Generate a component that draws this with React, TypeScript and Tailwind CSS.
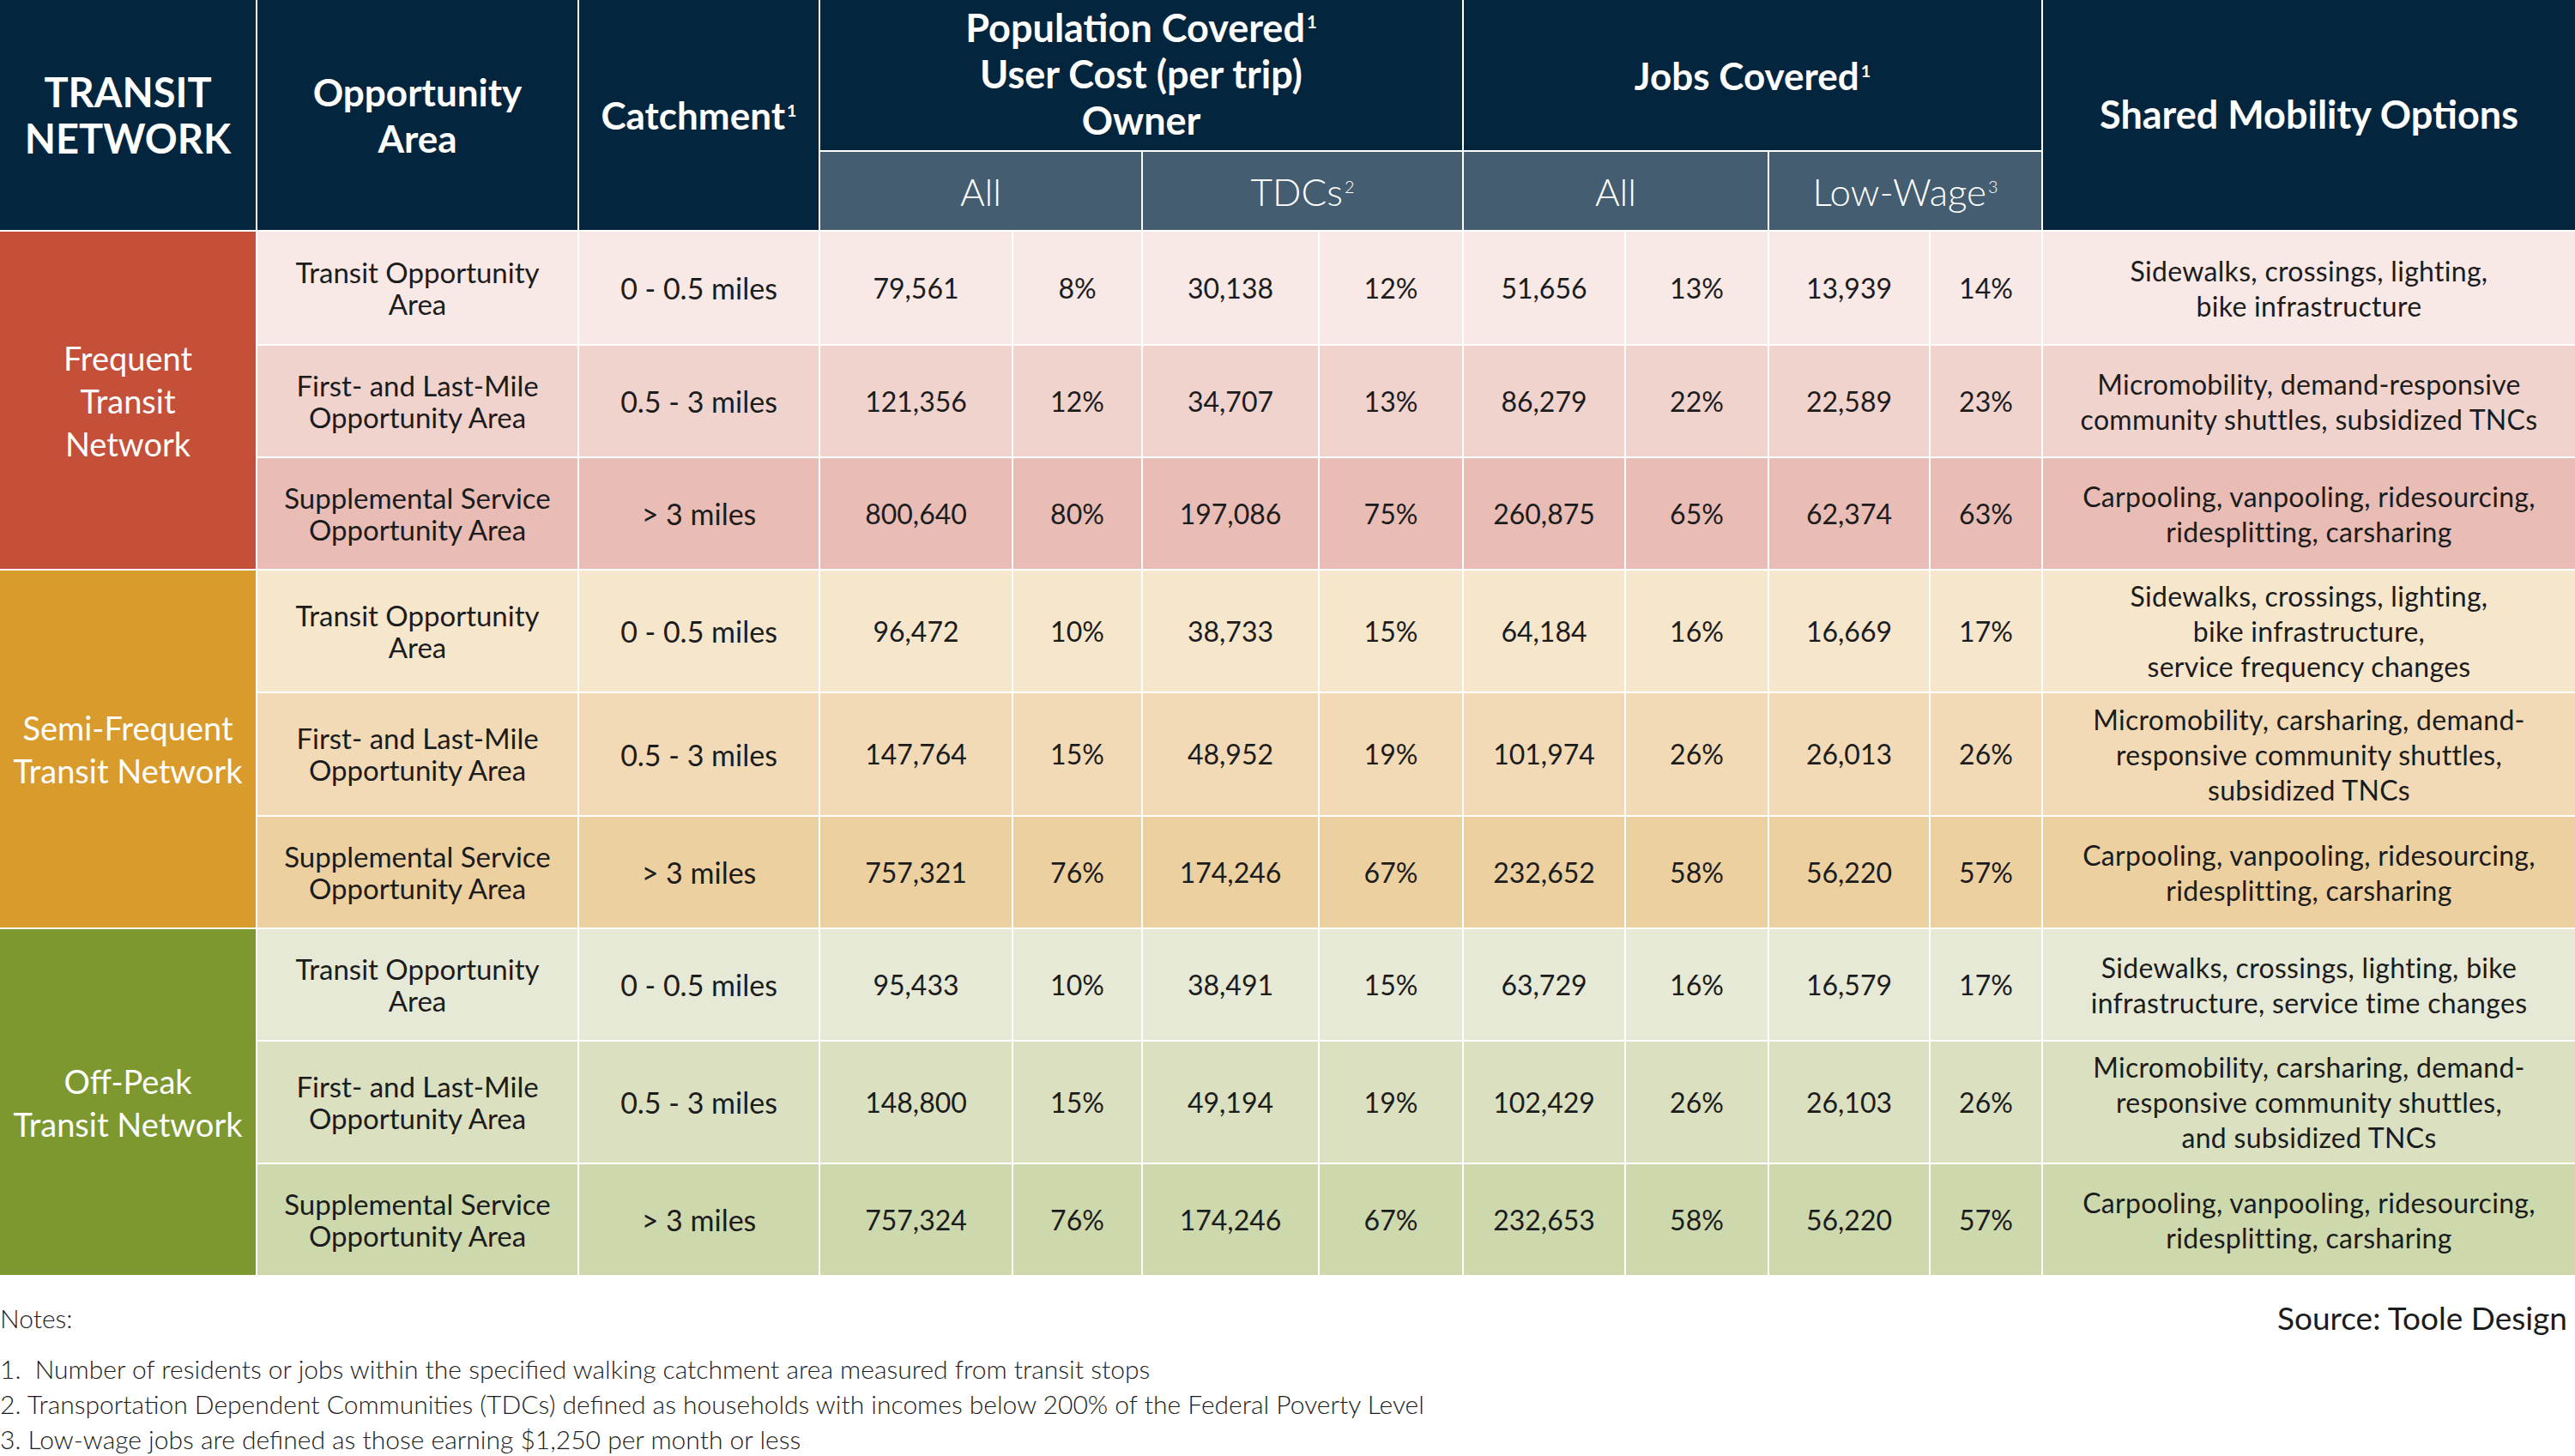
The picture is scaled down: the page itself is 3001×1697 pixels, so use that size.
import clsx from "clsx";

type Row = {
  area: string[];
  catchment: string;
  values: string[];
  options: string[];
  bg: string;
  h: string;
};

type Network = {
  label: string[];
  color: string;
  rows: Row[];
};

const areaTransit = ["Transit Opportunity", "Area"];
const areaFirstLast = ["First- and Last-Mile", "Opportunity Area"];
const areaSupp = ["Supplemental Service", "Opportunity Area"];
const carpool = ["Carpooling, vanpooling, ridesourcing,", "ridesplitting, carsharing"];

const networks: Network[] = [
  {
    label: ["Frequent", "Transit", "Network"],
    color: "bg-[#c5503a]",
    rows: [
      {
        area: areaTransit,
        catchment: "0 - 0.5 miles",
        values: ["79,561", "8%", "30,138", "12%", "51,656", "13%", "13,939", "14%"],
        options: ["Sidewalks, crossings, lighting,", "bike infrastructure"],
        bg: "bg-[#f8e8e6]",
        h: "h-[131px]",
      },
      {
        area: areaFirstLast,
        catchment: "0.5 - 3 miles",
        values: ["121,356", "12%", "34,707", "13%", "86,279", "22%", "22,589", "23%"],
        options: ["Micromobility, demand-responsive", "community shuttles, subsidized TNCs"],
        bg: "bg-[#f1d3ce]",
        h: "h-[129px]",
      },
      {
        area: areaSupp,
        catchment: "> 3 miles",
        values: ["800,640", "80%", "197,086", "75%", "260,875", "65%", "62,374", "63%"],
        options: carpool,
        bg: "bg-[#e9bcb5]",
        h: "h-[129px]",
      },
    ],
  },
  {
    label: ["Semi-Frequent", "Transit Network"],
    color: "bg-[#d99b2b]",
    rows: [
      {
        area: areaTransit,
        catchment: "0 - 0.5 miles",
        values: ["96,472", "10%", "38,733", "15%", "64,184", "16%", "16,669", "17%"],
        options: ["Sidewalks, crossings, lighting,", "bike infrastructure,", "service frequency changes"],
        bg: "bg-[#f6e6cc]",
        h: "h-[141px]",
      },
      {
        area: areaFirstLast,
        catchment: "0.5 - 3 miles",
        values: ["147,764", "15%", "48,952", "19%", "101,974", "26%", "26,013", "26%"],
        options: ["Micromobility, carsharing, demand-", "responsive community shuttles,", "subsidized TNCs"],
        bg: "bg-[#f3dab6]",
        h: "h-[142px]",
      },
      {
        area: areaSupp,
        catchment: "> 3 miles",
        values: ["757,321", "76%", "174,246", "67%", "232,652", "58%", "56,220", "57%"],
        options: carpool,
        bg: "bg-[#edd0a0]",
        h: "h-[129px]",
      },
    ],
  },
  {
    label: ["Off-Peak", "Transit Network"],
    color: "bg-[#7c982f]",
    rows: [
      {
        area: areaTransit,
        catchment: "0 - 0.5 miles",
        values: ["95,433", "10%", "38,491", "15%", "63,729", "16%", "16,579", "17%"],
        options: ["Sidewalks, crossings, lighting, bike", "infrastructure, service time changes"],
        bg: "bg-[#e6e9d5]",
        h: "h-[129px]",
      },
      {
        area: areaFirstLast,
        catchment: "0.5 - 3 miles",
        values: ["148,800", "15%", "49,194", "19%", "102,429", "26%", "26,103", "26%"],
        options: ["Micromobility, carsharing, demand-", "responsive community shuttles,", "and subsidized TNCs"],
        bg: "bg-[#dae0c0]",
        h: "h-[141px]",
      },
      {
        area: areaSupp,
        catchment: "> 3 miles",
        values: ["757,324", "76%", "174,246", "67%", "232,653", "58%", "56,220", "57%"],
        options: carpool,
        bg: "bg-[#cdd8ac]",
        h: "h-[129px]",
      },
    ],
  },
];

const notes = [
  "1.  Number of residents or jobs within the specified walking catchment area measured from transit stops",
  "2. Transportation Dependent Communities (TDCs) defined as households with incomes below 200% of the Federal Poverty Level",
  "3. Low-wage jobs are defined as those earning $1,250 per month or less",
];

function Sup({ n }: { n: string }) {
  return <span className="relative -top-[0.75em] ml-[2px] text-[0.45em] leading-[0]">{n}</span>;
}

const head = "flex items-center justify-center bg-[#03253d] text-center font-bold text-white";
const sub = "flex items-center justify-center bg-[#445d70] text-center text-[44px] font-light text-white";
const cell = "flex items-center justify-center text-center text-[#1c1c1c]";

export default function App() {
  return (
    <div className="w-[3001px] bg-white font-['Lato',sans-serif]">
      <div className="grid grid-cols-[298px_373px_279px_223px_149px_204px_166px_187px_165px_186px_129px_1fr] grid-rows-[175px_91px] gap-[2px] bg-white">
        {/* header */}
        <div className={clsx(head, "row-span-2 text-[47px] leading-[54px]")}>
          TRANSIT
          <br />
          NETWORK
        </div>
        <div className={clsx(head, "row-span-2 text-[44px] leading-[54px]")}>
          Opportunity
          <br />
          Area
        </div>
        <div className={clsx(head, "row-span-2 text-[44px]")}>
          <span>
            Catchment
            <Sup n="1" />
          </span>
        </div>
        <div className={clsx(head, "col-span-4 text-[45px] leading-[54px]")}>
          <div className="pb-[4px]">
            Population Covered
            <Sup n="1" />
            <br />
            User Cost (per trip)
            <br />
            Owner
          </div>
        </div>
        <div className={clsx(head, "col-span-4 text-[44px]")}>
          <span>
            Jobs Covered
            <Sup n="1" />
          </span>
        </div>
        <div className={clsx(head, "row-span-2 text-[45px]")}>Shared Mobility Options</div>

        <div className={clsx(sub, "col-span-2")}>All</div>
        <div className={clsx(sub, "col-span-2")}>
          <span>
            TDCs
            <Sup n="2" />
          </span>
        </div>
        <div className={clsx(sub, "col-span-2")}>All</div>
        <div className={clsx(sub, "col-span-2")}>
          <span>
            Low-Wage
            <Sup n="3" />
          </span>
        </div>

        {/* body */}
        {networks.map((net) => (
          <NetworkBlock key={net.label.join(" ")} net={net} />
        ))}
      </div>

      <div className="mt-[30px] flex items-center justify-between pr-[9px]">
        <p className="text-[30px] font-light leading-[40px] text-[#1c1c1c]">Notes:</p>
        <p className="text-[37px] leading-[40px] text-[#1c1c1c]">Source: Toole Design</p>
      </div>
      <ul className="mt-[19px] text-[30px] font-light leading-[41px] text-[#1c1c1c]">
        {notes.map((n) => (
          <li key={n} className="whitespace-pre">
            {n}
          </li>
        ))}
      </ul>
    </div>
  );
}

function NetworkBlock({ net }: { net: Network }) {
  return (
    <>
      <div
        className={clsx(
          net.color,
          "row-span-3 flex items-center justify-center text-center text-[38px] leading-[50px] text-white"
        )}
      >
        <div>
          {net.label.map((l) => (
            <div key={l}>{l}</div>
          ))}
        </div>
      </div>
      {net.rows.map((row, i) => (
        <div key={i} className="contents">
          <div className={clsx(cell, row.bg, row.h, "text-[33px] leading-[37px]")}>
            <div>
              {row.area.map((a) => (
                <div key={a}>{a}</div>
              ))}
            </div>
          </div>
          <div className={clsx(cell, row.bg, "text-[34px]")}>{row.catchment}</div>
          {row.values.map((v, j) => (
            <div key={j} className={clsx(cell, row.bg, "text-[32px]")}>
              {v}
            </div>
          ))}
          <div className={clsx(cell, row.bg, "text-[32px] leading-[41px] tracking-[0.3px]")}>
            <div>
              {row.options.map((o) => (
                <div key={o}>{o}</div>
              ))}
            </div>
          </div>
        </div>
      ))}
    </>
  );
}
